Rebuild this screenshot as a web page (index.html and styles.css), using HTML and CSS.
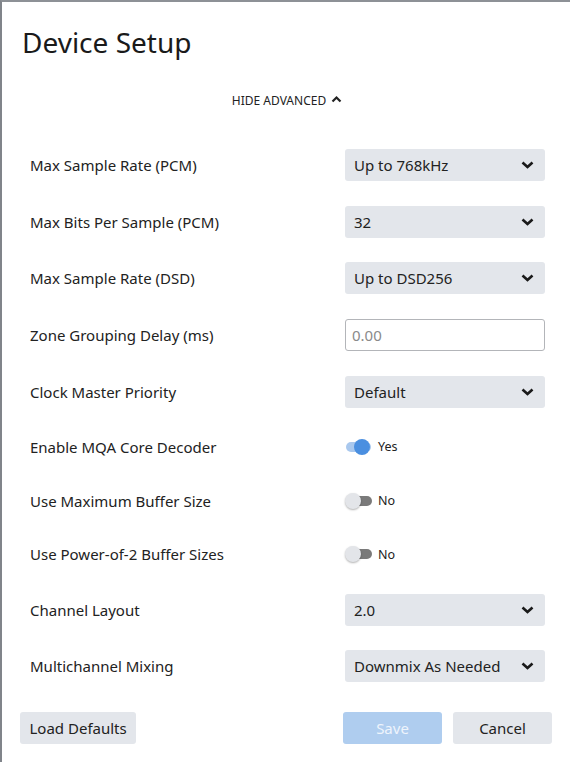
FILE: index.html
```html
<!DOCTYPE html>
<html>
<head>
<meta charset="utf-8">
<link rel="stylesheet" href="styles.css">
</head>
<body>
<div class="dialog">
  <h1 class="title">Device Setup</h1>
  <div class="advanced">
    <span>HIDE ADVANCED</span>
    <svg class="caret" width="11" height="8" viewBox="0 0 11 8"><path d="M1.5 6.5 L5.5 2.5 L9.5 6.5" fill="none" stroke="#222" stroke-width="2.2"/></svg>
  </div>
  <div class="settings">
    <div class="row">
      <div class="label">Max Sample Rate (PCM)</div>
      <div class="select"><span>Up to 768kHz</span><svg class="chev" width="13" height="8" viewBox="0 0 13 8"><path d="M1.5 1.5 L6.5 6 L11.5 1.5" fill="none" stroke="#1a1a1a" stroke-width="2.6"/></svg></div>
    </div>
    <div class="row">
      <div class="label">Max Bits Per Sample (PCM)</div>
      <div class="select"><span>32</span><svg class="chev" width="13" height="8" viewBox="0 0 13 8"><path d="M1.5 1.5 L6.5 6 L11.5 1.5" fill="none" stroke="#1a1a1a" stroke-width="2.6"/></svg></div>
    </div>
    <div class="row">
      <div class="label">Max Sample Rate (DSD)</div>
      <div class="select"><span>Up to DSD256</span><svg class="chev" width="13" height="8" viewBox="0 0 13 8"><path d="M1.5 1.5 L6.5 6 L11.5 1.5" fill="none" stroke="#1a1a1a" stroke-width="2.6"/></svg></div>
    </div>
    <div class="row">
      <div class="label">Zone Grouping Delay (ms)</div>
      <div class="input">0.00</div>
    </div>
    <div class="row">
      <div class="label">Clock Master Priority</div>
      <div class="select"><span>Default</span><svg class="chev" width="13" height="8" viewBox="0 0 13 8"><path d="M1.5 1.5 L6.5 6 L11.5 1.5" fill="none" stroke="#1a1a1a" stroke-width="2.6"/></svg></div>
    </div>
    <div class="row row-toggle">
      <div class="label">Enable MQA Core Decoder</div>
      <div class="toggle-wrap"><span class="toggle on"><span class="track"></span><span class="knob"></span></span><span class="tlabel">Yes</span></div>
    </div>
    <div class="row row-toggle">
      <div class="label">Use Maximum Buffer Size</div>
      <div class="toggle-wrap"><span class="toggle off"><span class="track"></span><span class="knob"></span></span><span class="tlabel">No</span></div>
    </div>
    <div class="row row-toggle">
      <div class="label">Use Power-of-2 Buffer Sizes</div>
      <div class="toggle-wrap"><span class="toggle off"><span class="track"></span><span class="knob"></span></span><span class="tlabel">No</span></div>
    </div>
    <div class="row">
      <div class="label">Channel Layout</div>
      <div class="select"><span>2.0</span><svg class="chev" width="13" height="8" viewBox="0 0 13 8"><path d="M1.5 1.5 L6.5 6 L11.5 1.5" fill="none" stroke="#1a1a1a" stroke-width="2.6"/></svg></div>
    </div>
    <div class="row">
      <div class="label">Multichannel Mixing</div>
      <div class="select"><span>Downmix As Needed</span><svg class="chev" width="13" height="8" viewBox="0 0 13 8"><path d="M1.5 1.5 L6.5 6 L11.5 1.5" fill="none" stroke="#1a1a1a" stroke-width="2.6"/></svg></div>
    </div>
  </div>
  <div class="footer">
    <button class="btn">Load Defaults</button>
    <div class="right">
      <button class="btn save">Save</button>
      <button class="btn">Cancel</button>
    </div>
  </div>
</div>
</body>
</html>
```
FILE: styles.css
```css
html, body {
  margin: 0;
  padding: 0;
  background: #ffffff;
}
body {
  font-family: "Noto Sans", "Open Sans", sans-serif;
  color: #222;
}
.dialog {
  width: 570px;
  height: 762px;
  box-sizing: border-box;
  border-top: 2px solid #8d9196;
  border-left: 2px solid #80848a;
  display: flex;
  flex-direction: column;
}
.title {
  margin: 0;
  padding: 22px 0 0 20px;
  font-size: 28px;
  line-height: 36px;
  font-weight: 400;
  color: #1a1a1a;
}
.advanced {
  margin-top: 30px;
  height: 20px;
  display: flex;
  align-items: center;
  justify-content: center;
  gap: 5px;
  font-size: 12px;
  color: #222;
  padding-left: 2px;
}
.caret {
  display: block;
  margin-top: -2px;
}
.settings {
  margin-top: 39px;
  padding: 0 25px 0 28px;
  display: flex;
  flex-direction: column;
  gap: 24.7px;
}
.row {
  height: 32px;
  display: flex;
  align-items: center;
  justify-content: space-between;
}
.row-toggle {
  height: 29px;
}
.label {
  font-size: 15px;
  color: #222;
}
.select {
  width: 200px;
  height: 32px;
  box-sizing: border-box;
  background: #e3e6eb;
  border-radius: 3px;
  display: flex;
  align-items: center;
  justify-content: space-between;
  padding: 0 11px 0 9px;
  font-size: 15px;
  color: #222;
}
.chev {
  display: block;
}
.input {
  width: 200px;
  height: 32px;
  box-sizing: border-box;
  border: 1px solid #b3b5b9;
  border-radius: 3px;
  background: #fff;
  display: flex;
  align-items: center;
  padding-left: 6px;
  font-size: 15px;
  color: #8a8a8a;
}
.toggle-wrap {
  width: 200px;
  display: flex;
  align-items: center;
  gap: 5px;
}
.toggle {
  position: relative;
  width: 28px;
  height: 16px;
  display: block;
}
.toggle .track {
  position: absolute;
  left: 1px;
  top: 3px;
  width: 25px;
  height: 10px;
  border-radius: 5px;
}
.toggle .knob {
  position: absolute;
  top: 0;
  width: 16px;
  height: 16px;
  border-radius: 50%;
}
.toggle.on .track {
  background: #a9c8ee;
}
.toggle.on .knob {
  left: 9px;
  background: #4a8fe0;
}
.toggle.off .track {
  left: 2px;
  background: #7a7a7a;
}
.toggle.off .knob {
  left: 0;
  background: #e3e5e9;
  box-shadow: 0 1px 2px rgba(0, 0, 0, 0.3);
}
.tlabel {
  font-size: 12.5px;
  color: #222;
}
.footer {
  margin-top: 30px;
  padding: 0 18px 0 18px;
  display: flex;
  justify-content: space-between;
}
.right {
  display: flex;
  gap: 11px;
}
.btn {
  height: 32px;
  border: none;
  border-radius: 3px;
  background: #e3e6eb;
  font-family: "Noto Sans", "Open Sans", sans-serif;
  font-size: 15px;
  color: #222;
  padding: 0 9.5px;
}
.right .btn {
  width: 99px;
}
.save {
  background: #afcdef;
  color: #eef4fc;
}
```
